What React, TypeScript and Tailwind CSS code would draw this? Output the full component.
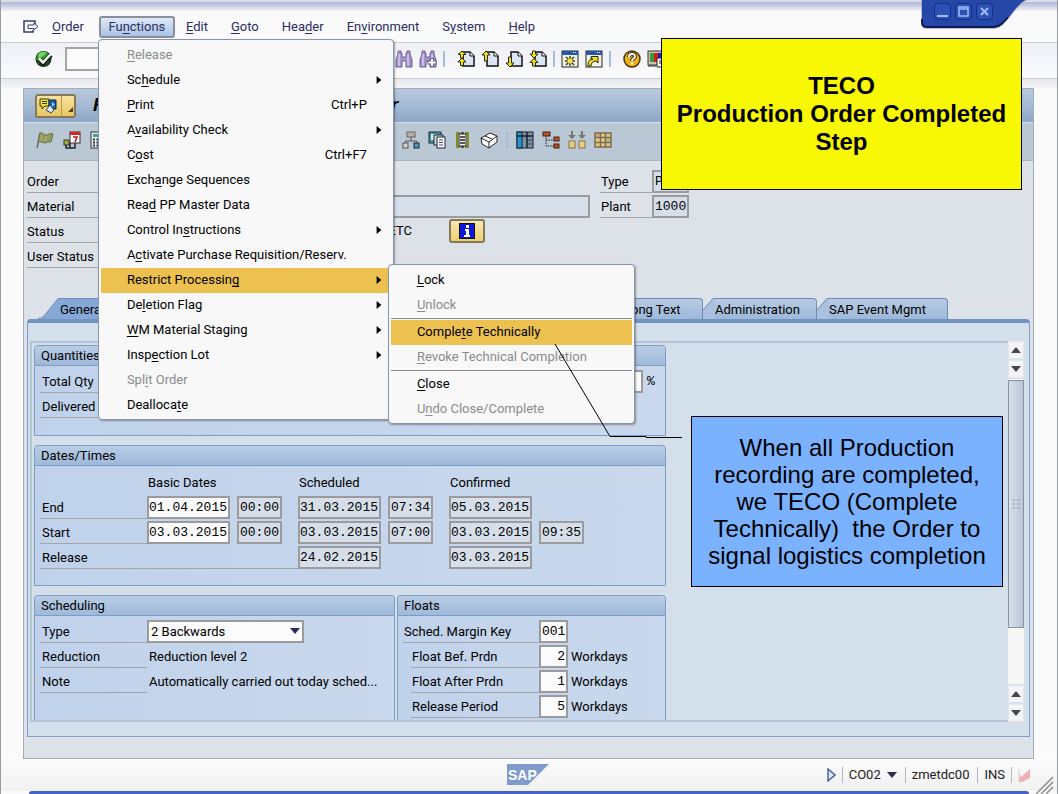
import React from 'react';
import clsx from 'clsx';

type MenuEntry = {
    label: string;
    shortcut?: string;
    disabled?: boolean;
    arrow?: boolean;
    active?: boolean;
    lineAbove?: boolean;
};

// "&" marks the mnemonic letter
const MENU_BAR = ['&Edit', '&Goto', 'Hea&der', 'En&vironment', 'S&ystem', '&Help'];

const FUNCTIONS_MENU: MenuEntry[] = [
    { label: '&Release', disabled: true },
    { label: 'Sc&hedule', arrow: true },
    { label: '&Print', shortcut: 'Ctrl+P' },
    { label: 'A&vailability Check', arrow: true },
    { label: 'C&ost', shortcut: 'Ctrl+F7' },
    { label: 'Exch&ange Sequences' },
    { label: 'Rea&d PP Master Data' },
    { label: 'Control In&structions', arrow: true },
    { label: 'A&ctivate Purchase Requisition/Reserv.' },
    { label: 'Restrict Processin&g', arrow: true, active: true },
    { label: 'De&letion Flag', arrow: true },
    { label: '&WM Material Staging', arrow: true },
    { label: 'Insp&ection Lot', arrow: true },
    { label: 'Spl&it Order', disabled: true },
    { label: 'Dealloca&te' },
];

const RESTRICT_MENU: MenuEntry[] = [
    { label: '&Lock' },
    { label: '&Unlock', disabled: true },
    { label: 'Comple&te Technically', active: true, lineAbove: true },
    { label: '&Revoke Technical Completion', disabled: true },
    { label: '&Close', lineAbove: true },
    { label: 'U&ndo Close/Complete', disabled: true },
];

const Mnemonic: React.FC<{ text: string }> = ({ text }) => {
    const at = text.indexOf('&');
    if (at < 0) return <>{text}</>;
    return (
        <span>
            {text.slice(0, at)}
            <u className="underline-offset-2">{text[at + 1]}</u>
            {text.slice(at + 2)}
        </span>
    );
};

/* ---------- icons ---------- */

const Icon: React.FC<{ children: React.ReactNode; className?: string }> = ({ children, className }) => (
    <svg viewBox="0 0 18 18" className={clsx('h-[18px] w-[18px] shrink-0', className)} aria-hidden="true">
        {children}
    </svg>
);

const CheckIcon = () => (
    <Icon>
        <circle cx="8.5" cy="9" r="8" fill="#1d3a1a" />
        <circle cx="8" cy="8" r="6.5" fill="#2f9a2a" />
        <path d="M3 5a6 6 0 0 1 9-2L4 9z" fill="#7ccf70" />
        <path d="M4 9l4 4 8-8" fill="none" stroke="#111" strokeWidth="4.5" />
        <path d="M4 8.500l4 4 8-8.500" fill="none" stroke="#fff" strokeWidth="2.500" />
    </Icon>
);

const Binoculars: React.FC<{ plus?: boolean }> = ({ plus }) => (
    <Icon>
        <path d="M3 1h3v2h1v4h4V3h1V1h3v3l2 6v7h-6v-6H7v6H1v-7l2-6z" fill="#a493cc" stroke="#6d6092" />
        <path d="M4 4v12M13 4v12" stroke="#d5ccec" strokeWidth="1.500" />
        {plus && <path d="M13 8v9M8.500 12.500h9" stroke="#6d6092" strokeWidth="4" />}
        {plus && <path d="M13 9v7M9.500 12.500h7" stroke="#fff" strokeWidth="2" />}
    </Icon>
);

const PageIcon: React.FC<{ kind: 'first' | 'prev' | 'next' | 'last' }> = ({ kind }) => (
    <Icon>
        <path d="M6 2h7l4 4v10H6z" fill="#dbe6f5" stroke="#111" strokeWidth="1.500" />
        <path d="M13 2v4h4" fill="#fff" stroke="#111" />
        {kind === 'first' && (
            <path d="M5 1L1 4.500h2.500V8h3V4.500H9zM5 8l-4 4h2.500v3.500h3V12H9z" fill="#f3e200" stroke="#222" />
        )}
        {kind === 'prev' && <path d="M5 1L1 5h2.500v6h3V5H9z" fill="#f3e200" stroke="#222" />}
        {kind === 'next' && <path d="M3.500 7h3v6H9l-4 4-4-4h2.500z" fill="#f3e200" stroke="#222" />}
        {kind === 'last' && (
            <path d="M3.500 1h3v3H9L5 8 1 4h2.500zM5 8.500l-4 4h2.500V16h3v-3.500H9z" fill="#f3e200" stroke="#222" />
        )}
    </Icon>
);

const SessionIcon: React.FC<{ kind: 'new' | 'shortcut' }> = ({ kind }) => (
    <Icon>
        <rect x="1" y="1" width="16" height="16" fill="#f5f1e4" stroke="#222" />
        <rect x="1" y="1" width="16" height="4" fill="#2557a8" />
        <path d="M12 2.500h1M14 2.500h1" stroke="#fff" />
        {kind === 'new' ? (
            <>
                <path d="M9 6v10M4 11h10M5 7l8 8M13 7l-8 8" stroke="#3c3a10" strokeWidth="1.500" />
                <circle cx="9" cy="11" r="2.500" fill="#f5e33c" />
            </>
        ) : (
            <path d="M3 16c0-5 2-7 5-7H6l0-2.500h7V13l-2-2c-3 0-5 2-5 5z" fill="#f3e200" stroke="#222" />
        )}
    </Icon>
);

const HelpIcon = () => (
    <Icon>
        <circle cx="9" cy="9" r="8" fill="#e9b11c" stroke="#4a3408" strokeWidth="1.500" />
        <path d="M4 6a6 6 0 0 1 7-3" fill="none" stroke="#fbe79a" strokeWidth="1.500" />
        <path d="M6 7c0-4 6-4 6-.500 0 2-3 2-3 4.500" fill="none" stroke="#3a2606" strokeWidth="4" />
        <path d="M6 7c0-4 6-4 6-.500 0 2-3 2-3 4.500M9 12.500v2" fill="none" stroke="#fff" strokeWidth="2" />
    </Icon>
);

const LayoutIcon = () => (
    <Icon>
        <rect x="1" y="1" width="17" height="14" fill="#c8c4b8" stroke="#3a352c" />
        <path d="M3 3h4v9H3z" fill="#3a9c34" />
        <path d="M7 3h4v9H7z" fill="#d42020" />
        <path d="M11 3h5v9h-5z" fill="#2222c8" />
        <path d="M10 8h7v9h-7z" fill="#fff" stroke="#222" />
        <path d="M12 11h4M12 13h4M1 16h8" stroke="#222" />
    </Icon>
);

const OverviewIcon = () => (
    <svg viewBox="0 0 18 16" className="h-4 w-[18px] shrink-0" aria-hidden="true">
        <path d="M1 1h9v7H6l-3 3V8H1z" fill="#f2e233" stroke="#3b3a10" />
        <path d="M3 3.500h5M3 5.500h5" stroke="#3b3a10" />
        <path d="M10 2h7v9h-7z" fill="#1e5aa8" stroke="#0d2a55" />
        <path d="M13 4l3 2.500L13 9z" fill="#7fd4f4" />
        <path d="M7 12l4-5 4 5-3 3z" fill="#dbe8f7" stroke="#34465f" />
    </svg>
);

const FlagIcon = () => (
    <Icon>
        <path d="M4 2L1 17" stroke="#6e6a58" strokeWidth="1.500" />
        <path d="M4 2c3-1 4 3 7 2 2-1 3-2 6-1l-2 8c-3-1-4 1-6 1s-4-2-7-1z" fill="#8f9a5c" stroke="#6b7446" />
        <path d="M6 4l-1 6M10 5l-1 6" stroke="#b4bd83" />
    </Icon>
);

const ScheduleIcon = () => (
    <Icon>
        <rect x="7" y="1" width="10" height="11" fill="#fff" stroke="#3b2a2a" />
        <rect x="7" y="1" width="10" height="3" fill="#d12929" />
        <path d="M10 6h4l-2 5" fill="none" stroke="#b01818" strokeWidth="1.500" />
        <rect x="1" y="9" width="5" height="5" fill="#9ab82c" stroke="#333" />
        <path d="M3 14v3h9v-5M7 17v-5" fill="none" stroke="#222" strokeWidth="1.500" />
    </Icon>
);

const CalculatorIcon = () => (
    <Icon>
        <rect x="1" y="1" width="13" height="16" fill="#e8ebe7" stroke="#333" />
        <rect x="3" y="3" width="9" height="3" fill="#3aa39b" />
        <path d="M3 8.500h9M3 11.500h9M3 14.500h9" stroke="#334" strokeWidth="2" strokeDasharray="2 1.500" />
    </Icon>
);

const HierarchyIcon = () => (
    <Icon>
        <path d="M9 6v4M3.500 12v-2h11v2" fill="none" stroke="#555" />
        <rect x="5" y="1" width="8" height="5" fill="#b8b0a2" stroke="#666" />
        <rect x="1" y="12" width="5" height="5" fill="#d8d3cc" stroke="#555" />
        <rect x="12" y="12" width="5" height="5" fill="#4b97cc" stroke="#222" />
    </Icon>
);

const CopyIcon = () => (
    <Icon>
        <rect x="1" y="1" width="12" height="11" fill="#3e9a8c" stroke="#225" />
        <path d="M3 3h5v6H3z" fill="#d6eee6" />
        <rect x="6" y="4" width="9" height="10" fill="#cfe0ea" stroke="#223" />
        <rect x="9" y="6" width="8" height="11" fill="#fff" stroke="#223" />
        <path d="M11 9h4M11 11.500h4M11 14h4" stroke="#446" />
    </Icon>
);

const ScrollListIcon = () => (
    <Icon>
        <path d="M6 2H3v14h3M11 2h3v14h-3" fill="none" stroke="#84901c" strokeWidth="2" />
        <rect x="5" y="3" width="7" height="12" fill="#f4f4ee" stroke="#222" />
        <path d="M6 6h5M6 9h5M6 12h5" stroke="#222" strokeWidth="1.500" />
        <path d="M8.500 1v2M8.500 15v2" stroke="#222" strokeWidth="2" />
    </Icon>
);

const BoxIcon = () => (
    <Icon>
        <path d="M1 7l9-5 7 3v6l-8 6-7-4z" fill="#fff" stroke="#222" strokeLinejoin="round" />
        <path d="M1 7l8 4 8-6M9 11v6M5 5l7 3" fill="none" stroke="#222" />
    </Icon>
);

const TableIcon = () => (
    <Icon>
        <rect x="1" y="1" width="16" height="16" fill="#7f93a5" stroke="#15202b" />
        <rect x="1" y="1" width="5" height="16" fill="#2599d6" stroke="#15202b" />
        <path d="M1 5h16M11 1v16" stroke="#15202b" strokeWidth="1.500" />
        <path d="M12 9h5M12 13h5" stroke="#445" />
    </Icon>
);

const TreeIcon = () => (
    <Icon>
        <path d="M4 4v11h8M4 9h8" fill="none" stroke="#222" strokeDasharray="1.500 1" />
        <rect x="1" y="1" width="7" height="4" fill="#b5552a" stroke="#4a1f0c" />
        <rect x="12" y="6" width="5" height="4" fill="#b5552a" stroke="#4a1f0c" />
        <rect x="12" y="13" width="5" height="4" fill="#b5552a" stroke="#4a1f0c" />
    </Icon>
);

const DistributeIcon = () => (
    <Icon>
        <path d="M3 0h2v4h3l-4 4-4-4h3zM13 0h2v4h3l-4 4-4-4h3z" fill="#77766f" />
        <rect x="1" y="10" width="6" height="7" fill="#e6cf7d" stroke="#85754a" />
        <rect x="11" y="10" width="6" height="7" fill="#e6cf7d" stroke="#85754a" />
    </Icon>
);

const GridIcon = () => (
    <Icon>
        <rect x="1" y="2" width="16" height="14" fill="#e0c783" />
        <path d="M1 2h5v5H1z" fill="#d8a48c" />
        <path d="M12 7h5v5h-5z" fill="#b3bd86" />
        <path d="M1 2h16v14H1zM6.500 2v14M11.500 2v14M1 6.500h16M1 11.500h16" fill="none" stroke="#7d6c50" strokeWidth="1.500" />
    </Icon>
);

const Triangle: React.FC<{ dir: 'up' | 'down' | 'right'; className?: string }> = ({ dir, className }) => (
    <svg viewBox="0 0 10 10" className={clsx('shrink-0 fill-current', className)} aria-hidden="true">
        {dir === 'up' && <path d="M0 8h10L5 2z" />}
        {dir === 'down' && <path d="M0 2h10L5 8z" />}
        {dir === 'right' && <path d="M2 0v10l6-5z" />}
    </svg>
);

/* ---------- building blocks ---------- */

const Separator = () => <span className="h-4 w-0.5 shrink-0 bg-[#a9bdd8]" />;

const ToolButton: React.FC<{ title: string; children: React.ReactNode }> = ({ title, children }) => (
    <button type="button" aria-label={title} className="flex shrink-0">
        {children}
    </button>
);

const MenuList: React.FC<{ items: MenuEntry[]; className: string; children?: React.ReactNode }> = ({ items, className, children }) => (
    <div
        role="menu"
        className={clsx(
            'absolute z-20 rounded-sm border border-[#8796ad] bg-[#f8f8f8] px-0.5 pt-[3px] pb-px text-black shadow-[1px_1px_2px_rgba(0,0,0,0.35)]',
            className
        )}
    >
        {items.map((item) => (
            <React.Fragment key={item.label}>
                {item.lineAbove && <div className="h-0.5 border-t border-[#8c8c8c]" />}
                <div className={clsx('relative', item.active && 'bg-[#ecc150]')}>
                    <button
                        type="button"
                        role="menuitem"
                        disabled={item.disabled}
                        className={clsx(
                            'flex h-[25px] w-full items-center pr-2 pl-[26px] text-left whitespace-nowrap',
                            item.disabled && 'text-[#8b8b8b]'
                        )}
                    >
                        <span className="flex-1">
                            <Mnemonic text={item.label} />
                        </span>
                        {item.shortcut && <span className="mr-4">{item.shortcut}</span>}
                        {item.arrow && <Triangle dir="right" className="h-2 w-2" />}
                    </button>
                    {item.active && children}
                </div>
            </React.Fragment>
        ))}
    </div>
);

const Field: React.FC<{ label: string; value: string; editable?: boolean; className?: string }> = ({
    label,
    value,
    editable,
    className,
}) => (
    <input
        aria-label={label}
        defaultValue={value}
        readOnly={!editable}
        className={clsx(
            "h-[23px] shrink-0 self-end border-2 border-[#9b9a9c] font-['Liberation_Mono',monospace] text-[13px] text-black outline-none",
            editable ? 'bg-[#fbfbfb]' : 'bg-[#d6dfe9]',
            className
        )}
    />
);

const RowLabel: React.FC<{ children: React.ReactNode; className?: string }> = ({ children, className }) => (
    <span className={clsx('flex h-[25px] shrink-0 items-center border-b border-[#a3a5a8] pt-1 whitespace-nowrap', className)}>
        {children}
    </span>
);

const Group: React.FC<{ title: string; className?: string; open?: boolean; children: React.ReactNode }> = ({
    title,
    className,
    open,
    children,
}) => (
    <section
        className={clsx(
            'rounded-t-sm border border-[#7f9cc2] bg-linear-to-r from-[#c0d2eb] to-[#c9d8ec]',
            open && 'border-b-0',
            className
        )}
    >
        <h2 className="flex h-5 items-center rounded-t-sm border-b border-[#7f9cc2] bg-linear-to-b from-[#b9cde5] to-[#9fb9da] px-1.5">
            {title}
        </h2>
        {children}
    </section>
);

const Tab: React.FC<{ label: string; active?: boolean; className: string }> = ({ label, active, className }) => (
    <button type="button" role="tab" aria-selected={!!active} className={clsx('flex h-[21px] shrink-0', className)}>
        <svg
            viewBox={active ? '0 0 22 21' : '0 0 12 21'}
            className={clsx('h-[21px] shrink-0', active ? 'w-[22px]' : 'w-3')}
            aria-hidden="true"
        >
            {active ? (
                <>
                    <path d="M0 21Q4 21 6 18L20 1h2v20z" fill="#86a8d7" />
                    <path d="M0 20.500Q4 20.500 6 18L20 .500h2" fill="none" stroke="#6e8cb5" />
                </>
            ) : (
                <>
                    <path d="M0 12L10 0h2v21H0z" fill="#a9c1de" />
                    <path d="M0 12L10 .500h2" fill="none" stroke="#6e8cb5" />
                </>
            )}
        </svg>
        <span
            className={clsx(
                'flex h-full flex-1 items-center rounded-tr-sm border-t border-r border-[#6e8cb5] bg-linear-to-b pt-0.5 whitespace-nowrap',
                active ? 'from-[#86a8d7] to-[#86a8d7]' : 'from-[#b7cbe3] to-[#9db8d8]'
            )}
        >
            {label}
        </span>
    </button>
);

const ScrollButton: React.FC<{ dir: 'up' | 'down' }> = ({ dir }) => (
    <button
        type="button"
        aria-label={`Scroll ${dir}`}
        className="flex h-[18px] items-center justify-center border border-[#e2e6ec] bg-[#f3f4f7] text-[#474747]"
    >
        <Triangle dir={dir} className="h-2.5 w-2.5" />
    </button>
);

/* ---------- screen parts ---------- */

const WindowControls = () => (
    <div className="absolute top-0 right-[30px] z-10 h-[30px] w-[106px]">
        <svg viewBox="0 0 106 30" className="absolute inset-0 h-full w-full" aria-hidden="true">
            <path d="M0 0h106c-10 3-20 28-33 29H6q-6 0-6-6z" fill="#8e8a90" opacity=".5" />
            <path d="M1 0h104C94 4 86 27 73 27H6q-5 0-5-5z" fill="#2548a8" />
            <path d="M1 19v3q0 5 5 5h67c6 0 10-5 14-10" fill="none" stroke="#0c1c58" strokeWidth="2" />
        </svg>
        <div className="relative flex gap-1 pt-[3px] pl-[13px]">
            {['Minimize', 'Maximize', 'Close'].map((name) => (
                <button
                    key={name}
                    type="button"
                    aria-label={name}
                    className="h-[17px] w-[17px] rounded-sm border border-[#142f80] bg-[#2c51b4]"
                >
                    <svg viewBox="0 0 15 15" className="h-full w-full" fill="none" stroke="#9fbcf8" strokeWidth="2">
                        {name === 'Minimize' && <path d="M2 12h11" />}
                        {name === 'Maximize' && <path d="M3 3h9v9H3zM3 5h9" strokeWidth="1.500" />}
                        {name === 'Close' && <path d="M4 4l7 7M11 4l-7 7" />}
                    </svg>
                </button>
            ))}
        </div>
    </div>
);

const MenuBar = () => (
    <nav className="flex h-8 items-center gap-[23px] border-b border-[#c9ccd3] pl-[22px] text-[#2a2c62]">
        <button type="button" className="flex items-center gap-[13px]">
            <svg viewBox="0 0 16 14" className="h-3.5 w-4" fill="none" stroke="#3a3c6a" strokeWidth="1.500" aria-hidden="true">
                <path d="M12 4V1H1v11h9v-2" />
                <path d="M5 5h6V3l4 3.500-4 3.500V8.500H5z" strokeWidth="1" />
            </svg>
            <Mnemonic text="&Order" />
        </button>
        <div className="relative -mr-3 -ml-2">
            <button
                type="button"
                aria-haspopup="menu"
                className="flex h-[22px] w-[76px] items-center justify-center rounded-[3px] border-2 border-[#8b8f9c] bg-linear-to-b from-[#dfe9f6] to-[#a9c3e6]"
            >
                <Mnemonic text="Fu&nctions" />
            </button>
            <MenuList items={FUNCTIONS_MENU} className="top-[23px] -left-px w-[296px]">
                <MenuList items={RESTRICT_MENU} className="-top-1 left-full -ml-[3px] w-[247px]" />
            </MenuList>
        </div>
        {MENU_BAR.map((label) => (
            <button type="button" key={label}>
                <Mnemonic text={label} />
            </button>
        ))}
    </nav>
);

const StandardToolbar = () => (
    <div className="flex h-9 items-center gap-1.5 border-b border-[#c9ccd3] bg-linear-to-b from-[#eef0f6] to-[#fbfbfc] pb-[3px] pl-[34px]">
        <div className="flex w-[354px] items-center gap-3">
            <ToolButton title="Enter">
                <CheckIcon />
            </ToolButton>
            <input aria-label="Command field" className="h-6 w-40 border-2 border-[#a4a4a6] bg-[#fbfbfb] outline-none" />
        </div>
        <ToolButton title="Find"><Binoculars /></ToolButton>
        <ToolButton title="Find next"><Binoculars plus /></ToolButton>
        <Separator />
        <span />
        <ToolButton title="First page"><PageIcon kind="first" /></ToolButton>
        <ToolButton title="Previous page"><PageIcon kind="prev" /></ToolButton>
        <ToolButton title="Next page"><PageIcon kind="next" /></ToolButton>
        <ToolButton title="Last page"><PageIcon kind="last" /></ToolButton>
        <Separator />
        <ToolButton title="New session"><SessionIcon kind="new" /></ToolButton>
        <ToolButton title="Create shortcut"><SessionIcon kind="shortcut" /></ToolButton>
        <Separator />
        <span />
        <ToolButton title="Help"><HelpIcon /></ToolButton>
        <ToolButton title="Customize layout"><LayoutIcon /></ToolButton>
    </div>
);

const TitleBar = () => (
    <header className="flex h-[34px] items-center gap-[17px] border-b border-[#d3dde8] bg-linear-to-b from-[#b9cade] to-[#8fa8c8] pl-[11px]">
        <button
            type="button"
            aria-label="Services for object"
            className="flex h-6 w-[41px] shrink-0 items-center rounded-[3px] border-2 border-[#85795a] bg-linear-to-b from-[#f7e3a0] to-[#e8c660] pl-0.5 text-[#4d4222]"
        >
            <OverviewIcon />
            <span className="ml-1 flex h-full items-end border-l border-[#b59a50] pb-1 pl-1.5">
                <svg viewBox="0 0 5 5" className="h-[5px] w-[5px] fill-current" aria-hidden="true">
                    <path d="M5 0v5H0z" />
                </svg>
            </span>
        </button>
        <h1 className="text-[19px] font-bold italic whitespace-nowrap font-['Liberation_Sans',sans-serif]">
            Production order Change: Header
        </h1>
    </header>
);

const ApplicationToolbar = () => (
    <div className="flex h-[38px] items-center gap-2 border-b border-[#aab5c2] bg-[#bac8d6] pb-[3px] pl-3">
        <div className="flex w-[358px] gap-[9px]">
            <ToolButton title="Release order"><FlagIcon /></ToolButton>
            <ToolButton title="Schedule order"><ScheduleIcon /></ToolButton>
            <ToolButton title="Cost order"><CalculatorIcon /></ToolButton>
        </div>
        <ToolButton title="Network"><HierarchyIcon /></ToolButton>
        <ToolButton title="Operations"><CopyIcon /></ToolButton>
        <ToolButton title="Sequences"><ScrollListIcon /></ToolButton>
        <ToolButton title="Components"><BoxIcon /></ToolButton>
        <Separator />
        <ToolButton title="Table"><TableIcon /></ToolButton>
        <ToolButton title="Structure"><TreeIcon /></ToolButton>
        <ToolButton title="Distribute"><DistributeIcon /></ToolButton>
        <ToolButton title="Matrix"><GridIcon /></ToolButton>
    </div>
);

const OrderHeader = () => (
    <div className="grid grid-cols-[120px_453px_52px_37px] pt-[7px] pl-[3px]">
        <RowLabel>Order</RowLabel>
        <div className="flex"><Field label="Order" value="" className="w-28" /></div>
        <RowLabel className="pl-px">Type</RowLabel>
        <Field label="Type" value="PP01" className="w-full pl-px" />

        <RowLabel>Material</RowLabel>
        <div className="flex"><Field label="Material" value="" className="w-[443px]" /></div>
        <RowLabel className="pl-px">Plant</RowLabel>
        <Field label="Plant" value="1000" className="w-full pl-px" />

        <RowLabel>Status</RowLabel>
        <div className="col-span-3 flex h-[25px] items-center pt-px">
            <span className="w-[265px] text-right">REL SETC</span>
            <button
                type="button"
                aria-label="Status information"
                className="ml-[37px] flex h-6 w-9 items-center justify-center rounded-[3px] border-2 border-[#85795a] bg-linear-to-b from-[#f7e7ae] to-[#ecd074]"
            >
                <svg viewBox="0 0 16 16" className="h-4 w-4" aria-hidden="true">
                    <rect width="16" height="16" fill="#111" />
                    <rect x="1" y="1" width="14" height="14" fill="#1018d8" />
                    <path d="M7 2h3v3H7zM6 6h4v6h1v2H5v-2h2V8H6z" fill="#fff" />
                </svg>
            </button>
        </div>

        <RowLabel>User Status</RowLabel>
    </div>
);

const DATE_ROWS = [
    { name: 'End', basic: ['01.04.2015', '00:00'], scheduled: ['31.03.2015', '07:34'], confirmed: ['05.03.2015', ''] },
    { name: 'Start', basic: ['03.03.2015', '00:00'], scheduled: ['03.03.2015', '07:00'], confirmed: ['03.03.2015', '09:35'] },
    { name: 'Release', basic: ['', ''], scheduled: ['24.02.2015', ''], confirmed: ['03.03.2015', ''] },
];

const DatesGroup = () => (
    <Group title="Dates/Times" className="h-[141px]">
        <div className="grid grid-cols-[107px_151px_151px_1fr] pt-[5px] pl-[5px]">
            <span />
            <span className="flex h-[23px] items-center pl-px">Basic Dates</span>
            <span className="flex h-[23px] items-center pl-px">Scheduled</span>
            <span className="flex h-[23px] items-center pl-px">Confirmed</span>
            {DATE_ROWS.map((row) => (
                <React.Fragment key={row.name}>
                    <RowLabel className="pl-0.5">{row.name}</RowLabel>
                    {[row.basic, row.scheduled, row.confirmed].map(([date, time], i) => (
                        <div key={i} className={clsx('flex gap-[7px]', !date && 'border-b border-[#a3a5a8]')}>
                            {date && <Field label={`${row.name} date`} value={date} editable={i === 0} className="w-[83px]" />}
                            {time && <Field label={`${row.name} time`} value={time} className="w-[45px] pl-px" />}
                        </div>
                    ))}
                </React.Fragment>
            ))}
        </div>
    </Group>
);

const SchedulingGroup = () => (
    <Group title="Scheduling" open className="w-[361px]">
        <div className="grid grid-cols-[107px_1fr] pt-0.5 pl-[5px]">
            <RowLabel className="pl-0.5">
                <label htmlFor="sched-type">Type</label>
            </RowLabel>
            <div className="relative flex h-[25px] w-[157px] items-end">
                <select
                    id="sched-type"
                    className="h-[23px] w-full appearance-none border-2 border-[#9b9a9c] bg-[#fbfbfb] pb-0.5 pl-0.5 text-[13px] outline-none"
                >
                    <option>2 Backwards</option>
                </select>
                <Triangle dir="down" className="pointer-events-none absolute right-1 bottom-[7px] h-2.5 w-2.5 text-[#2a2c5e]" />
            </div>
            <RowLabel className="pl-0.5">Reduction</RowLabel>
            <span className="flex items-center pt-[3px] pl-0.5">Reduction level 2</span>
            <RowLabel className="pl-0.5">Note</RowLabel>
            <span className="flex items-center pt-[3px] pl-0.5 whitespace-nowrap">Automatically carried out today sched...</span>
        </div>
    </Group>
);

const FLOATS = [
    { label: 'Float Bef. Prdn', value: '2' },
    { label: 'Float After Prdn', value: '1' },
    { label: 'Release Period', value: '5' },
];

const FloatsGroup = () => (
    <Group title="Floats" open className="flex-1">
        <div className="pt-0.5 pl-[5px]">
            <div className="flex">
                <RowLabel className="w-[136px] pl-px">Sched. Margin Key</RowLabel>
                <Field label="Sched. Margin Key" value="001" editable className="w-[29px] pl-px" />
            </div>
            {FLOATS.map((row) => (
                <div key={row.label} className="flex items-center pl-2">
                    <RowLabel className="w-32 pl-px">{row.label}</RowLabel>
                    <Field label={row.label} value={row.value} editable className="w-[29px] pr-px text-right" />
                    <span className="pt-[3px] pl-[3px]">Workdays</span>
                </div>
            ))}
        </div>
    </Group>
);

const GeneralTab = () => (
    <div className="flex flex-1 border-x border-b border-[#7f9dc4] bg-[#d3dfea] pt-[18px] pr-[5px] pb-3.5 pl-0.5">
        <div className="flex flex-1 flex-col border-2 border-r-0 border-[#b4c4d4] pt-0.5 pl-0.5">
            <div className="flex w-[632px] flex-1 flex-col gap-[9px]">
                <Group title="Quantities" className="h-[91px]">
                    <div className="pt-0.5 pl-[5px]">
                        <div className="flex items-center">
                            <RowLabel className="w-[107px] pl-0.5">Total Qty</RowLabel>
                            <span className="w-[459px]" />
                            <Field label="Scrap portion" value="" editable className="w-[37px]" />
                            <span className="pt-0.5 pl-1 text-[13px] font-['Liberation_Mono',monospace]">%</span>
                        </div>
                        <RowLabel className="w-[107px] pl-0.5">Delivered</RowLabel>
                    </div>
                </Group>
                <DatesGroup />
                <div className="flex flex-1 gap-0.5">
                    <SchedulingGroup />
                    <FloatsGroup />
                </div>
            </div>
        </div>
        <div className="flex w-4 flex-col gap-px">
            <ScrollButton dir="up" />
            <ScrollButton dir="down" />
            <div className="flex flex-1 flex-col bg-[#f6f6f7] pt-px pb-14">
                <div className="flex flex-1 items-center justify-center border border-[#8b919c] bg-linear-to-r from-[#d8e0ea] to-[#b9c6d8]">
                    <svg viewBox="0 0 8 10" className="h-2.5 w-2" aria-hidden="true">
                        <path d="M0 1h3M5 1h3M0 5h3M5 5h3M0 9h3M5 9h3" stroke="#8f9cb0" />
                    </svg>
                </div>
            </div>
            <ScrollButton dir="up" />
            <ScrollButton dir="down" />
        </div>
    </div>
);

const StatusBar = () => (
    <footer className="relative flex h-8 items-center justify-end gap-1.5 bg-linear-to-b from-[#fbfbfc] to-[#f1f1f2] pr-[26px] text-[#222]">
        <svg viewBox="0 0 42 21" className="absolute top-[5px] left-[506px] h-[21px] w-[42px]" aria-label="SAP">
            <path d="M0 0h42L21 21H0z" fill="#7f9bca" />
            <text x="1" y="16" fontFamily="Liberation Sans, sans-serif" fontWeight="700" fontSize="14" fill="#fff">
                SAP
            </text>
        </svg>
        <svg viewBox="0 0 9 14" className="h-3.5 w-[9px]" aria-hidden="true">
            <path d="M1 1v12l7-6z" fill="#dbe6f6" stroke="#4c67a0" strokeWidth="1.500" />
        </svg>
        <span className="h-4 w-px bg-[#b4b6bb]" />
        <button type="button" className="flex items-center gap-1.5">
            CO02 <Triangle dir="down" className="h-2.5 w-2.5 text-[#2a2c4e]" />
        </button>
        <span className="ml-0.5 h-4 w-px bg-[#b4b6bb]" />
        <span>zmetdc00</span>
        <span className="ml-0.5 h-4 w-px bg-[#b4b6bb]" />
        <span>INS</span>
        <span className="h-4 w-px bg-[#b4b6bb]" />
        <svg viewBox="0 0 13 14" className="h-3.5 w-[13px]" aria-hidden="true">
            <path d="M1 14V5l2 4 9-8v9L4 14z" fill="#eeb0b4" />
            <path d="M1 0v14" stroke="#d8dadd" />
        </svg>
        <svg viewBox="0 0 20 20" className="absolute right-0.5 -bottom-1 h-5 w-5" fill="none" stroke="#8c8e93" aria-hidden="true">
            <path d="M1 19L18 2M6 19L18 7M11 19l7-7" strokeWidth="1.500" />
        </svg>
    </footer>
);

export default function App() {
    return (
        <div className="relative flex min-h-screen flex-col border-x border-[#9a9ba0] bg-[#fafafa] text-[13px] text-black font-['Roboto','Liberation_Sans',sans-serif]">
            <div className="h-[11px] border-t-2 border-[#d7dbea] bg-linear-to-b from-[#aeb6d4] to-[#f0f1f6]" />
            <WindowControls />
            <MenuBar />
            <StandardToolbar />
            <div className="h-[9px] bg-linear-to-b from-[#e7e9ee] to-[#f4f4f6]" />

            <main className="mr-[23px] ml-[22px] flex flex-1 flex-col border border-[#a3adba] bg-[#dde2e9]">
                <TitleBar />
                <ApplicationToolbar />
                <OrderHeader />
                <div className="mx-[3px] mt-[30px] mb-[21px] flex flex-1 flex-col">
                    <div role="tablist" className="flex pl-[11px]">
                        <Tab label="General" active className="w-[82px]" />
                        <Tab label="Assignment" className="w-[98px]" />
                        <Tab label="Goods Receipt" className="w-28" />
                        <Tab label="Control" className="w-[78px]" />
                        <Tab label="Dates/Qties" className="w-[100px]" />
                        <Tab label="Master Data" className="w-[104px]" />
                        <Tab label="Long Text" className="w-[91px]" />
                        <Tab label="Administration" className="w-[114px]" />
                        <Tab label="SAP Event Mgmt" className="w-[131px]" />
                    </div>
                    <div className="h-1 rounded-t-sm bg-[#7294c4]" />
                    <GeneralTab />
                </div>
            </main>

            <StatusBar />
            <div className="mx-7 h-[3px] rounded-t-full bg-[#4462c8]" />

            {/* callouts over the screen */}
            <div className="absolute top-[38px] left-[660px] z-30 flex h-[152px] w-[361px] items-center justify-center border border-black bg-[#f8f804] text-center text-[24px] leading-7 font-bold font-['Liberation_Sans',sans-serif]">
                <p>
                    TECO
                    <br />
                    Production Order Completed
                    <br />
                    Step
                </p>
            </div>
            <div className="absolute top-[416px] left-[690px] z-30 flex h-[171px] w-[312px] items-center justify-center border border-black bg-[#7ab2ff] text-center text-[24px] leading-[27px] whitespace-pre font-['Liberation_Sans',sans-serif]">
                <p>{'When all Production\nrecording are completed,\nwe TECO (Complete\nTechnically)  the Order to\nsignal logistics completion'}</p>
            </div>
            <svg
                viewBox="0 0 130 96"
                className="pointer-events-none absolute top-[343px] left-[553px] z-30 h-24 w-[130px]"
                fill="none"
                stroke="#000"
                aria-hidden="true"
            >
                <path d="M1 1l55 92.500h36l0 1h36" />
            </svg>
        </div>
    );
}
